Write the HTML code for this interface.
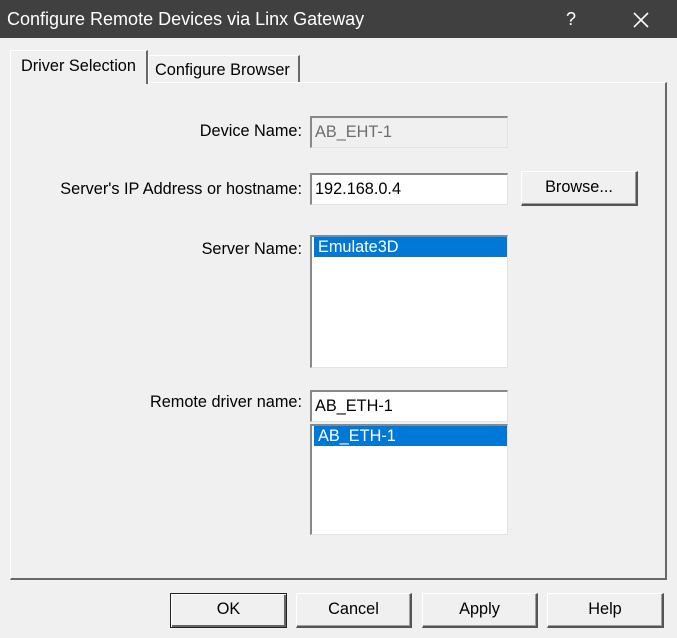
<!DOCTYPE html>
<html><head><style>
body{margin:0;width:677px;height:638px;background:#f0f0f0;font-family:"Liberation Sans",sans-serif;font-size:16.3px;color:#000;position:relative;overflow:hidden}
.a{position:absolute}
.title{left:0;top:0;width:677px;height:38px;background:#404040}
.lbl{text-align:right;width:300px;left:2px}
.field{background:#fff;border-top:2px solid #888;border-left:2px solid #888;border-right:1px solid #e3e3e3;border-bottom:1px solid #e3e3e3;box-sizing:border-box}
.btn{box-sizing:border-box;border:1px solid #fff;border-right:2px solid #555;border-bottom:2px solid #555;background:#f0f0f0;text-align:center;line-height:31px;box-shadow:inset -1px -1px 0 #a0a0a0}
.sel{background:#0078d7;color:#fff;left:2px;right:0;height:20px;line-height:20px;padding-left:4px}
</style></head><body>
<div class="a title"></div>
<div class="a" style="left:7px;top:9px;color:#fff;font-size:18px">Configure Remote Devices via Linx Gateway</div>
<div class="a" style="left:566px;top:9px;color:#fff;font-size:18px">?</div>
<svg class="a" style="left:632px;top:11px" width="18" height="18"><path d="M2 2L16 16M16 2L2 16" stroke="#fff" stroke-width="1.6"/></svg>

<div class="a" style="left:10px;top:82px;width:657px;height:498px;box-sizing:border-box;border-top:1px solid #fff;border-left:1px solid #fff;border-right:2px solid #696969;border-bottom:2px solid #696969"></div>
<div class="a" style="left:148px;top:55px;width:152px;height:27px;box-sizing:border-box;border-top:1px solid #fff;border-left:1px solid #fff;border-right:2px solid #696969;background:#f0f0f0;padding:5px 0 0 6px">Configure Browser</div>
<div class="a" style="left:10px;top:50px;width:138px;height:34px;box-sizing:border-box;border-top:1px solid #fff;border-left:1px solid #fff;border-right:2px solid #696969;background:#f0f0f0;padding:6px 0 0 10px">Driver Selection</div>

<div class="a lbl" style="top:122px">Device Name:</div>
<div class="a field" style="left:310px;top:116px;width:198px;height:32px;background:#f0f0f0;color:#6d6d6d;padding:5px 0 0 3px">AB_EHT-1</div>

<div class="a lbl" style="top:180px">Server's IP Address or hostname:</div>
<div class="a field" style="left:310px;top:173px;width:198px;height:32px;padding:5px 0 0 3px">192.168.0.4</div>
<div class="a btn" style="left:521px;top:171px;width:117px;height:35px">Browse...</div>

<div class="a lbl" style="top:240px">Server Name:</div>
<div class="a field" style="left:310px;top:235px;width:198px;height:133px"><div class="a sel" style="top:0">Emulate3D</div></div>

<div class="a lbl" style="top:393px">Remote driver name:</div>
<div class="a field" style="left:310px;top:390px;width:198px;height:32px;padding:5px 0 0 3px">AB_ETH-1</div>
<div class="a field" style="left:310px;top:424px;width:198px;height:111px"><div class="a sel" style="top:0">AB_ETH-1</div></div>

<div class="a btn" style="left:170px;top:593px;width:117px;height:35px;border:1px solid #222;box-shadow:inset 1px 1px 0 #fff,inset -2px -2px 0 #666">OK</div>
<div class="a btn" style="left:296px;top:593px;width:116px;height:35px">Cancel</div>
<div class="a btn" style="left:422px;top:593px;width:116px;height:35px">Apply</div>
<div class="a btn" style="left:547px;top:593px;width:117px;height:35px">Help</div>
</body></html>
